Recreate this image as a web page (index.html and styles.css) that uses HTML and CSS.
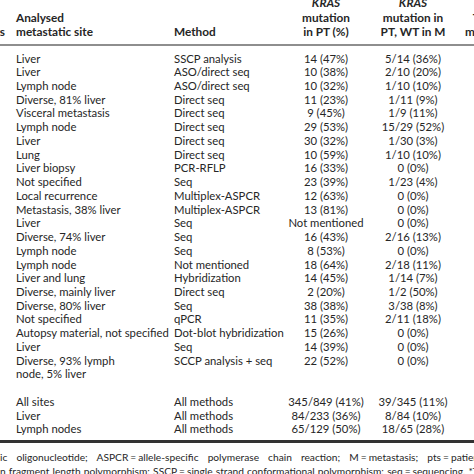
FILE: index.html
```html
<!DOCTYPE html>
<html lang="en">
<head>
<meta charset="utf-8">
<title>KRAS mutation table</title>
<link rel="stylesheet" href="styles.css">
</head>
<body>
<div class="page">
  <table class="data">
    <colgroup>
      <col class="c1"><col class="c2"><col class="c3"><col class="c4"><col class="c5"><col class="c6">
    </colgroup>
    <thead>
      <tr>
        <th class="num-h">No. of pts</th>
        <th class="left">Analysed<br>metastatic site</th>
        <th class="left">Method</th>
        <th class="mid"><i>KRAS</i><br>mutation<br>in PT (%)</th>
        <th class="mid"><i>KRAS</i><br>mutation in<br>PT, WT in M</th>
        <th class="last-h"><span class="stack"><i>KRAS</i><br>Total KRAS<br>mutation in M</span></th>
      </tr>
    </thead>
    <tbody>
      <tr class="first"><td></td><td>Liver</td><td>SSCP analysis</td><td class="mid">14 (47%)</td><td class="mid">5/14 (36%)</td><td></td></tr>
      <tr><td></td><td>Liver</td><td>ASO/direct seq</td><td class="mid">10 (38%)</td><td class="mid">2/10 (20%)</td><td></td></tr>
      <tr><td></td><td>Lymph node</td><td>ASO/direct seq</td><td class="mid">10 (32%)</td><td class="mid">1/10 (10%)</td><td></td></tr>
      <tr><td></td><td>Diverse, 81% liver</td><td>Direct seq</td><td class="mid">11 (23%)</td><td class="mid">1/11 (9%)</td><td></td></tr>
      <tr><td></td><td>Visceral metastasis</td><td>Direct seq</td><td class="mid">9 (45%)</td><td class="mid">1/9 (11%)</td><td></td></tr>
      <tr><td></td><td>Lymph node</td><td>Direct seq</td><td class="mid">29 (53%)</td><td class="mid">15/29 (52%)</td><td></td></tr>
      <tr><td></td><td>Liver</td><td>Direct seq</td><td class="mid">30 (32%)</td><td class="mid">1/30 (3%)</td><td></td></tr>
      <tr><td></td><td>Lung</td><td>Direct seq</td><td class="mid">10 (59%)</td><td class="mid">1/10 (10%)</td><td></td></tr>
      <tr><td></td><td>Liver biopsy</td><td>PCR-RFLP</td><td class="mid">16 (33%)</td><td class="mid">0 (0%)</td><td></td></tr>
      <tr><td></td><td>Not specified</td><td>Seq</td><td class="mid">23 (39%)</td><td class="mid">1/23 (4%)</td><td></td></tr>
      <tr><td></td><td>Local recurrence</td><td>Multiplex-ASPCR</td><td class="mid">12 (63%)</td><td class="mid">0 (0%)</td><td></td></tr>
      <tr><td></td><td>Metastasis, 38% liver</td><td>Multiplex-ASPCR</td><td class="mid">13 (81%)</td><td class="mid">0 (0%)</td><td></td></tr>
      <tr><td></td><td>Liver</td><td>Seq</td><td class="mid">Not mentioned</td><td class="mid">0 (0%)</td><td></td></tr>
      <tr><td></td><td>Diverse, 74% liver</td><td>Seq</td><td class="mid">16 (43%)</td><td class="mid">2/16 (13%)</td><td></td></tr>
      <tr><td></td><td>Lymph node</td><td>Seq</td><td class="mid">8 (53%)</td><td class="mid">0 (0%)</td><td></td></tr>
      <tr><td></td><td>Lymph node</td><td>Not mentioned</td><td class="mid">18 (64%)</td><td class="mid">2/18 (11%)</td><td></td></tr>
      <tr><td></td><td>Liver and lung</td><td>Hybridization</td><td class="mid">14 (45%)</td><td class="mid">1/14 (7%)</td><td></td></tr>
      <tr><td></td><td>Diverse, mainly liver</td><td>Direct seq</td><td class="mid">2 (20%)</td><td class="mid">1/2 (50%)</td><td></td></tr>
      <tr><td></td><td>Diverse, 80% liver</td><td>Seq</td><td class="mid">38 (38%)</td><td class="mid">3/38 (8%)</td><td></td></tr>
      <tr><td></td><td>Not specified</td><td>qPCR</td><td class="mid">11 (35%)</td><td class="mid">2/11 (18%)</td><td></td></tr>
      <tr><td></td><td>Autopsy material, not specified</td><td>Dot-blot hybridization</td><td class="mid">15 (26%)</td><td class="mid">0 (0%)</td><td></td></tr>
      <tr><td></td><td>Liver</td><td>Seq</td><td class="mid">14 (39%)</td><td class="mid">0 (0%)</td><td></td></tr>
      <tr><td></td><td>Diverse, 93% lymph<br>node, 5% liver</td><td>SCCP analysis + seq</td><td class="mid">22 (52%)</td><td class="mid">0 (0%)</td><td></td></tr>
      <tr class="blank"><td></td><td></td><td></td><td></td><td></td><td></td></tr>
      <tr><td></td><td>All sites</td><td>All methods</td><td class="mid">345/849 (41%)</td><td class="mid">39/345 (11%)</td><td></td></tr>
      <tr><td></td><td>Liver</td><td>All methods</td><td class="mid">84/233 (36%)</td><td class="mid">8/84 (10%)</td><td></td></tr>
      <tr class="last"><td></td><td>Lymph nodes</td><td>All methods</td><td class="mid">65/129 (50%)</td><td class="mid">18/65 (28%)</td><td></td></tr>
    </tbody>
  </table>
  <div class="notes">
    <p class="note l1">ic oligonucleotide; ASPCR<span class="eq">=</span>allele-specific polymerase chain reaction; M<span class="eq">=</span>metastasis; pts<span class="eq">=</span>patients</p>
    <p class="note l2">n fragment length polymorphism; SSCP<span class="eq">=</span>single strand conformational polymorphism; seq<span class="eq">=</span>sequencing, *Tumour</p>
  </div>
</div>
</body>
</html>
```
FILE: styles.css
```css
html, body {
  margin: 0;
  padding: 0;
  background: #ffffff;
}
.page {
  width: 474px;
  height: 474px;
  overflow: hidden;
  font-family: "Lato", "Open Sans", sans-serif;
  font-size: 11.3px;
  color: #262626;
}
.data {
  border-collapse: collapse;
  table-layout: fixed;
  width: 594px;
  margin-left: -60px;
  margin-top: -4px;
  border-bottom: 3px solid #333333;
}
.c1 { width: 72px; }
.c2 { width: 158px; }
.c3 { width: 114px; }
.c4 { width: 84px; }
.c5 { width: 90px; }
.c6 { width: 76px; }
th {
  font-size: 11.8px;
  font-weight: 700;
  line-height: 14.5px;
  vertical-align: bottom;
  padding: 0 0 4px 0;
  border-bottom: 2px solid #8e8e8e;
  white-space: nowrap;
}
th i { font-style: italic; }
th.left { text-align: left; padding-left: 4px; }
th.mid { text-align: center; }
th.last-h { text-align: left; padding-left: 7px; }
.stack { display: inline-block; text-align: center; }
th.num-h { text-align: right; padding-right: 7px; }
td {
  line-height: 13.74px;
  padding: 0;
  vertical-align: top;
  white-space: nowrap;
  text-align: left;
}
td:nth-child(2), td:nth-child(3) { padding-left: 4px; }
td.mid { text-align: center; }
tr.first td { padding-top: 6px; }
tr.blank td { height: 13.74px; }
tr.last td { padding-bottom: 4px; }
.notes {
  padding-top: 7px;
}
.note {
  margin: 0;
  font-size: 10.2px;
  line-height: 14px;
}
.eq { margin: 0 2px; }
.l1 {
  width: 487px;
  text-align: justify;
  text-align-last: justify;
}
.l2 {
  white-space: nowrap;
  text-align: left;
  word-spacing: 0.5px;
}
```
